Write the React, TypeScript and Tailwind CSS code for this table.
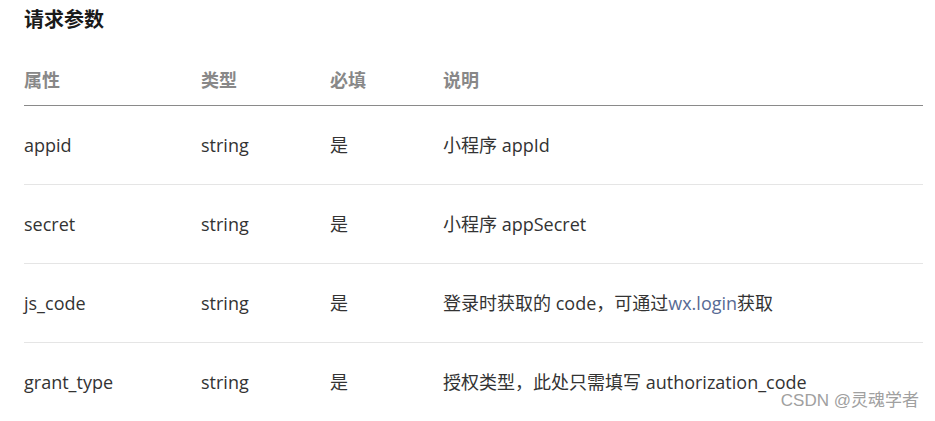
import React from "react";

const rows: { name: string; type: string; req: string; desc: React.ReactNode }[] = [
  { name: "appid", type: "string", req: "是", desc: "小程序 appId" },
  { name: "secret", type: "string", req: "是", desc: "小程序 appSecret" },
  {
    name: "js_code",
    type: "string",
    req: "是",
    desc: (
      <>
        登录时获取的 code，可通过<span className="text-[#576b95]">wx.login</span>获取
      </>
    ),
  },
  { name: "grant_type", type: "string", req: "是", desc: "授权类型，此处只需填写 authorization_code" },
];

export default function App() {
  return (
    <div
      className="relative w-[935px] h-[421px] bg-white overflow-hidden pl-[24px]"
      style={{ fontFamily: '"Open Sans", "Noto Sans CJK SC", sans-serif' }}
    >
      <div className="h-[40px] flex items-center text-[20px] font-bold text-[#1a1a1a]">请求参数</div>
      <div className="w-[899px] mt-[15px]">
        <div className="flex items-center h-[51px] border-b border-[#8a8a8a] text-[18px] font-bold text-[#888888]">
          <div className="w-[177px]">属性</div>
          <div className="w-[129px]">类型</div>
          <div className="w-[113px]">必填</div>
          <div className="flex-1">说明</div>
        </div>
        {rows.map((r, i) => (
          <div
            key={i}
            className="flex items-center h-[79px] border-b border-[#e5e5e5] text-[18px] text-[#333333]"
          >
            <div className="w-[177px]">{r.name}</div>
            <div className="w-[129px]">{r.type}</div>
            <div className="w-[113px]">{r.req}</div>
            <div className="flex-1">{r.desc}</div>
          </div>
        ))}
      </div>
      <div
        className="absolute right-[16px] bottom-[8px] text-[17px] text-[#a0a0a0]"
        style={{ fontFamily: '"Liberation Sans", "Noto Sans CJK SC", sans-serif' }}
      >
        CSDN @灵魂学者
      </div>
    </div>
  );
}
